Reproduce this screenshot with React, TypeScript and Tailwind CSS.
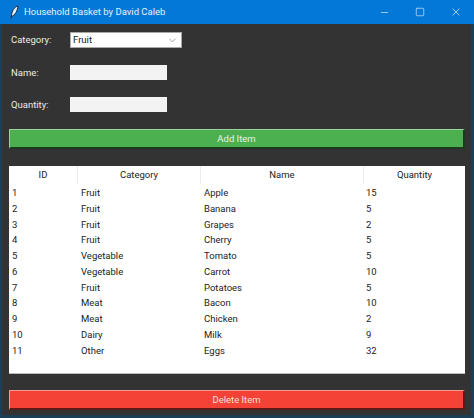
import { ChevronDown, Minus, Square, X } from 'lucide-react';

const rows = [
  ['1', 'Fruit', 'Apple', '15'],
  ['2', 'Fruit', 'Banana', '5'],
  ['3', 'Fruit', 'Grapes', '2'],
  ['4', 'Fruit', 'Cherry', '5'],
  ['5', 'Vegetable', 'Tomato', '5'],
  ['6', 'Vegetable', 'Carrot', '10'],
  ['7', 'Fruit', 'Potatoes', '5'],
  ['8', 'Meat', 'Bacon', '10'],
  ['9', 'Meat', 'Chicken', '2'],
  ['10', 'Dairy', 'Milk', '9'],
  ['11', 'Other', 'Eggs', '32'],
];

const cols = 'grid grid-cols-[69px_123px_163px_101px]';

function Field({ label }: { label: string }) {
  return (
    <div className="flex items-center h-[15px]">
      <span className="w-[61px] pl-[2px] text-[#ececec]">{label}</span>
      <div className="w-[97px] h-[15px] bg-[#f3f3f3]" />
    </div>
  );
}

export default function App() {
  return (
    <div className="w-[474px] h-[418px] bg-[#1b3f56] overflow-hidden font-['Roboto',sans-serif] text-[9.5px] leading-none">
      <div className="flex items-center h-[24px] bg-[#0478d7] pl-[10px] text-[10px]">
        <svg width="9" height="14" viewBox="0 0 9 14" className="mr-[5px]">
          <path d="M8 1C4 2 1.6 6 1.4 11.5 5 10.5 7.6 6 8 1Z" fill="#dcebf8" stroke="#12263c" strokeWidth="1" />
          <path d="M1.4 11.5 1 13.5" stroke="#12263c" strokeWidth="1" />
        </svg>
        <span className="text-[9.5px] text-[#e2f1fc]">Household Basket by David Caleb</span>
        <div className="ml-auto flex items-center text-[#d6ecfb]">
          <span className="w-[36px] flex justify-center"><Minus size={11} strokeWidth={1.5} /></span>
          <span className="w-[36px] flex justify-center"><Square size={10} strokeWidth={1.6} /></span>
          <span className="w-[36px] flex justify-center"><X size={12} strokeWidth={1.5} /></span>
        </div>
      </div>
      <div className="h-[391px] w-[469px] ml-[2px] bg-[#333333] pl-[7px] pt-[8px] flex flex-col">
        <div className="flex items-center h-[16px]">
          <span className="w-[61px] pl-[2px] text-[#ececec]">Category:</span>
          <div className="w-[112px] h-[16px] bg-white border border-[#a8a8a8] flex items-center justify-between pl-[2px] pr-[3px] text-[#1a1a1a]">
            <span>Fruit</span>
            <ChevronDown size={11} strokeWidth={1.2} className="text-[#555555]" />
          </div>
        </div>
        <div className="mt-[17px]"><Field label="Name:" /></div>
        <div className="mt-[17px]"><Field label="Quantity:" /></div>
        <button className="mt-[17px] h-[20px] w-[456px] bg-[#4caf50] border-t border-l border-[#9bd19d] border-b-2 border-r-2 border-b-[#1d3a1f] border-r-[#1d3a1f] text-[#e8f4e8] font-['Roboto',sans-serif] text-[9.5px]">
          Add Item
        </button>
        <div className="mt-[17px] h-[208px] w-[456px] bg-white border-b border-[#bbbbbb] text-[#222222]">
          <div className={`${cols} h-[18px] items-center text-center`}>
            <span className="border-r border-[#ececec] h-full flex items-center justify-center">ID</span>
            <span className="border-r border-[#ececec] h-full flex items-center justify-center">Category</span>
            <span className="border-r border-[#ececec] h-full flex items-center justify-center">Name</span>
            <span className="h-full flex items-center justify-center">Quantity</span>
          </div>
          <div className="pt-[1px]">
            {rows.map((r) => (
              <div key={r[0]} className={`${cols} h-[15.75px] items-center`}>
                {r.map((c, i) => (
                  <span key={i} className={i === 3 ? 'pl-[2px]' : 'pl-[3px]'}>{c}</span>
                ))}
              </div>
            ))}
          </div>
        </div>
        <button className="mt-[16px] h-[20px] w-[456px] bg-[#f44336] border-t border-l border-[#f59a92] border-b-2 border-r-2 border-b-[#5a1a15] border-r-[#5a1a15] text-[#fbdedb] font-['Roboto',sans-serif] text-[9.5px]">
          Delete Item
        </button>
      </div>
    </div>
  );
}
